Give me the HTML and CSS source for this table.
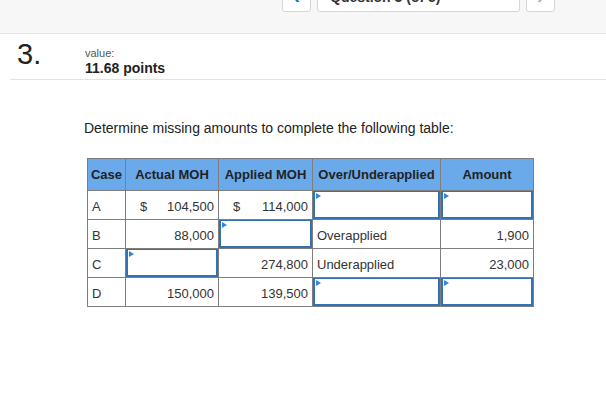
FILE: index.html
```html
<!DOCTYPE html>
<html>
<head>
  <title>Question 3</title>
  <link rel="stylesheet" href="styles.css">
</head>
<body>
  <div class="topbar">
    <div class="nav-btn prev">&#8249;</div>
    <div class="nav-select">
      <span>Question 3 (of 5)</span>
      <span class="caret"></span>
    </div>
    <div class="nav-btn next">&#8250;</div>
  </div>

  <div class="q-head">
    <div class="q-num">3.</div>
    <div class="q-meta">
      <div class="q-label">value:</div>
      <div class="q-points">11.68 points</div>
    </div>
  </div>

  <div class="q-body">
    <p class="prompt">Determine missing amounts to complete the following table:</p>

    <table class="moh">
      <colgroup>
        <col class="c-case">
        <col class="c-actual">
        <col class="c-applied">
        <col class="c-over">
        <col class="c-amount">
      </colgroup>
      <thead>
        <tr>
          <th>Case</th>
          <th>Actual MOH</th>
          <th>Applied MOH</th>
          <th>Over/Underapplied</th>
          <th>Amount</th>
        </tr>
      </thead>
      <tbody>
        <tr>
          <td>A</td>
          <td class="num"><span class="cur">$</span>104,500</td>
          <td class="num"><span class="cur">$</span>114,000</td>
          <td class="blank"><div class="input"></div></td>
          <td class="blank"><div class="input"></div></td>
        </tr>
        <tr>
          <td>B</td>
          <td class="num">88,000</td>
          <td class="blank"><div class="input"></div></td>
          <td>Overapplied</td>
          <td class="num">1,900</td>
        </tr>
        <tr>
          <td>C</td>
          <td class="blank"><div class="input"></div></td>
          <td class="num">274,800</td>
          <td>Underapplied</td>
          <td class="num">23,000</td>
        </tr>
        <tr>
          <td>D</td>
          <td class="num">150,000</td>
          <td class="num">139,500</td>
          <td class="blank"><div class="input"></div></td>
          <td class="blank"><div class="input"></div></td>
        </tr>
      </tbody>
    </table>
  </div>
</body>
</html>
```

FILE: styles.css
```css
body {
  font-family: 'Liberation Sans', Arial, sans-serif;
  background: #fff;
  margin: 0;
  color: #222;
}

/* question navigation, mostly scrolled off the top */
.topbar {
  height: 33px;
  background: #f7f7f7;
  border-bottom: 1px solid #e4e4e4;
  display: flex;
  justify-content: flex-end;
  gap: 6px;
  padding-right: 51px;
}
.nav-btn,
.nav-select {
  box-sizing: border-box;
  height: 30px;
  margin-top: -18px;
  background: #fff;
  border: 1px solid #d6d6d6;
  border-radius: 3px;
  display: flex;
  align-items: center;
}
.nav-btn {
  width: 29px;
  justify-content: center;
  font-size: 22px;
  font-weight: 700;
  color: #2a6ebb;
}
.nav-btn.next {
  color: #9cb9da;
}
.nav-select {
  width: 203px;
  padding: 0 14px 0 12px;
  justify-content: space-between;
  font-size: 14px;
  font-weight: 700;
  color: #333;
}
.caret {
  width: 0;
  height: 0;
  border-left: 4px solid transparent;
  border-right: 4px solid transparent;
  border-top: 4px solid #555;
}

/* question header */
.q-head {
  display: flex;
  height: 45px;
  margin-left: 10px;
  padding-left: 7px;
  border-bottom: 1px solid #e3e3e3;
}
.q-num {
  width: 68px;
  padding-top: 6px;
  font-size: 29px;
  line-height: 29px;
  color: #222;
}
.q-meta {
  padding-top: 13px;
}
.q-label {
  font-size: 11px;
  line-height: 13px;
  color: #555;
}
.q-points {
  font-size: 14px;
  line-height: 16px;
  font-weight: 700;
  color: #222;
}

/* question body */
.q-body {
  padding: 40px 0 0 84px;
}
.prompt {
  margin: 0 0 22px;
  font-size: 14px;
  line-height: 16px;
  color: #222;
}

.moh {
  margin-left: 3px;
  border-collapse: collapse;
  table-layout: fixed;
  width: 447px;
  font-size: 13px;
}
.c-case { width: 38px; }
.c-actual { width: 93px; }
.c-applied { width: 94px; }
.c-over { width: 128px; }
.c-amount { width: 93px; }

.moh th {
  height: 31px;
  padding: 0 2px;
  background: #6aaaea;
  border: 1px solid #7e7e7e;
  font-weight: 700;
  color: #222;
  text-align: center;
}
.moh td {
  height: 25px;
  padding: 3px 4px 0;
  border: 1px solid #7e7e7e;
  color: #333;
  white-space: nowrap;
}
.moh td.num {
  text-align: right;
}
.cur {
  float: left;
  margin-left: 10px;
}
.moh td.blank {
  height: 28px;
  padding: 0;
}
.input {
  position: relative;
  box-sizing: border-box;
  height: 28px;
  border: 2px solid #3470b6;
  border-top-width: 1px;
}
.input::before {
  content: '';
  position: absolute;
  top: 1px;
  left: 1px;
  border-left: 5px solid #2f86de;
  border-top: 3px solid transparent;
  border-bottom: 3px solid transparent;
}
```
